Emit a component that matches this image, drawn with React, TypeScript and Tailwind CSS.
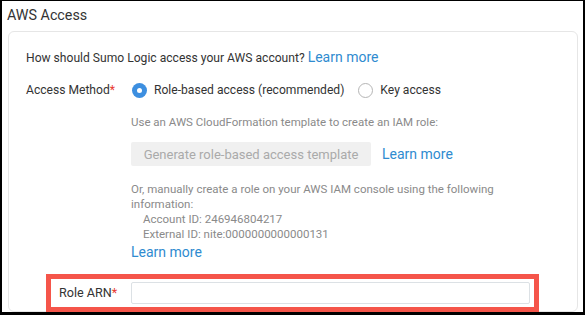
import React from 'react';

const font = { fontFamily: 'Roboto, "Liberation Sans", sans-serif' };

function Radio({ checked }: { checked?: boolean }) {
  return checked ? (
    <span className="w-[15px] h-[15px] rounded-full bg-[#3d8fe0] flex items-center justify-center">
      <span className="w-[5px] h-[5px] rounded-full bg-white" />
    </span>
  ) : (
    <span className="w-[15px] h-[15px] rounded-full border border-[#b5b5b5] bg-white" />
  );
}

export default function App() {
  return (
    <div
      style={font}
      className="w-[585px] h-[315px] bg-white border-l-2 border-t border-r-2 border-b-[3px] border-black flex flex-col overflow-hidden text-[#333]"
    >
      {/* Header */}
      <div className="h-[30px] pl-[5px] pt-[4px] text-[14.3px] leading-[20px] text-[#333]">
        AWS Access
      </div>

      {/* Card */}
      <div className="ml-[6px] mr-[5px] flex-1 border border-[#e6e6e6] rounded-[6px] pt-[16px] pl-[17px] flex flex-col">
        <p className="text-[12.1px] leading-[18px]">
          How should Sumo Logic access your AWS account?{' '}
          <span className="text-[14px] text-[#2f8bd0]">Learn more</span>
        </p>

        <div className="mt-[14px] flex items-center h-[18px] text-[12.1px]">
          <div className="w-[106px]">
            Access Method<span className="text-[#e8392f]">*</span>
          </div>
          <div className="flex items-center gap-[7px]">
            <Radio checked />
            <span>Role-based access (recommended)</span>
          </div>
          <div className="flex items-center gap-[7px] ml-[14px]">
            <Radio />
            <span>Key access</span>
          </div>
        </div>

        <div className="ml-[105px] mt-[16px] text-[11.5px] text-[#8a8a8a] leading-[15px]">
          <p>Use an AWS CloudFormation template to create an IAM role:</p>
          <div className="mt-[12px] flex items-center">
            <div className="h-[24px] w-[240px] bg-[#f0f0f0] rounded-[2px] flex items-center justify-center text-[13px] text-[#aaaaaa]">
              Generate role-based access template
            </div>
            <span className="ml-[11px] text-[14px] text-[#2f8bd0]">Learn more</span>
          </div>
          <p className="mt-[16px]">
            Or, manually create a role on your AWS IAM console using the following
            <br />
            information:
          </p>
          <p className="pl-[12px]">Account ID: 246946804217</p>
          <p className="pl-[12px]">External ID: nite:0000000000000131</p>
          <p className="text-[14px] text-[#2f8bd0] leading-[18px] mt-[1px]">Learn more</p>
        </div>

        {/* Role ARN (highlighted) */}
        <div className="mt-auto ml-[20px] mr-[38px] -mb-px border-[5px] border-[#f5554a] h-[38px] flex items-center pl-[8px] pr-[4px]">
          <div className="w-[72px] text-[12.6px] text-[#333]">
            Role ARN<span className="text-[#e8392f]">*</span>
          </div>
          <div className="flex-1 h-[22px] border border-[#dce1e5] rounded-[2px] bg-white" />
        </div>
      </div>
    </div>
  );
}
